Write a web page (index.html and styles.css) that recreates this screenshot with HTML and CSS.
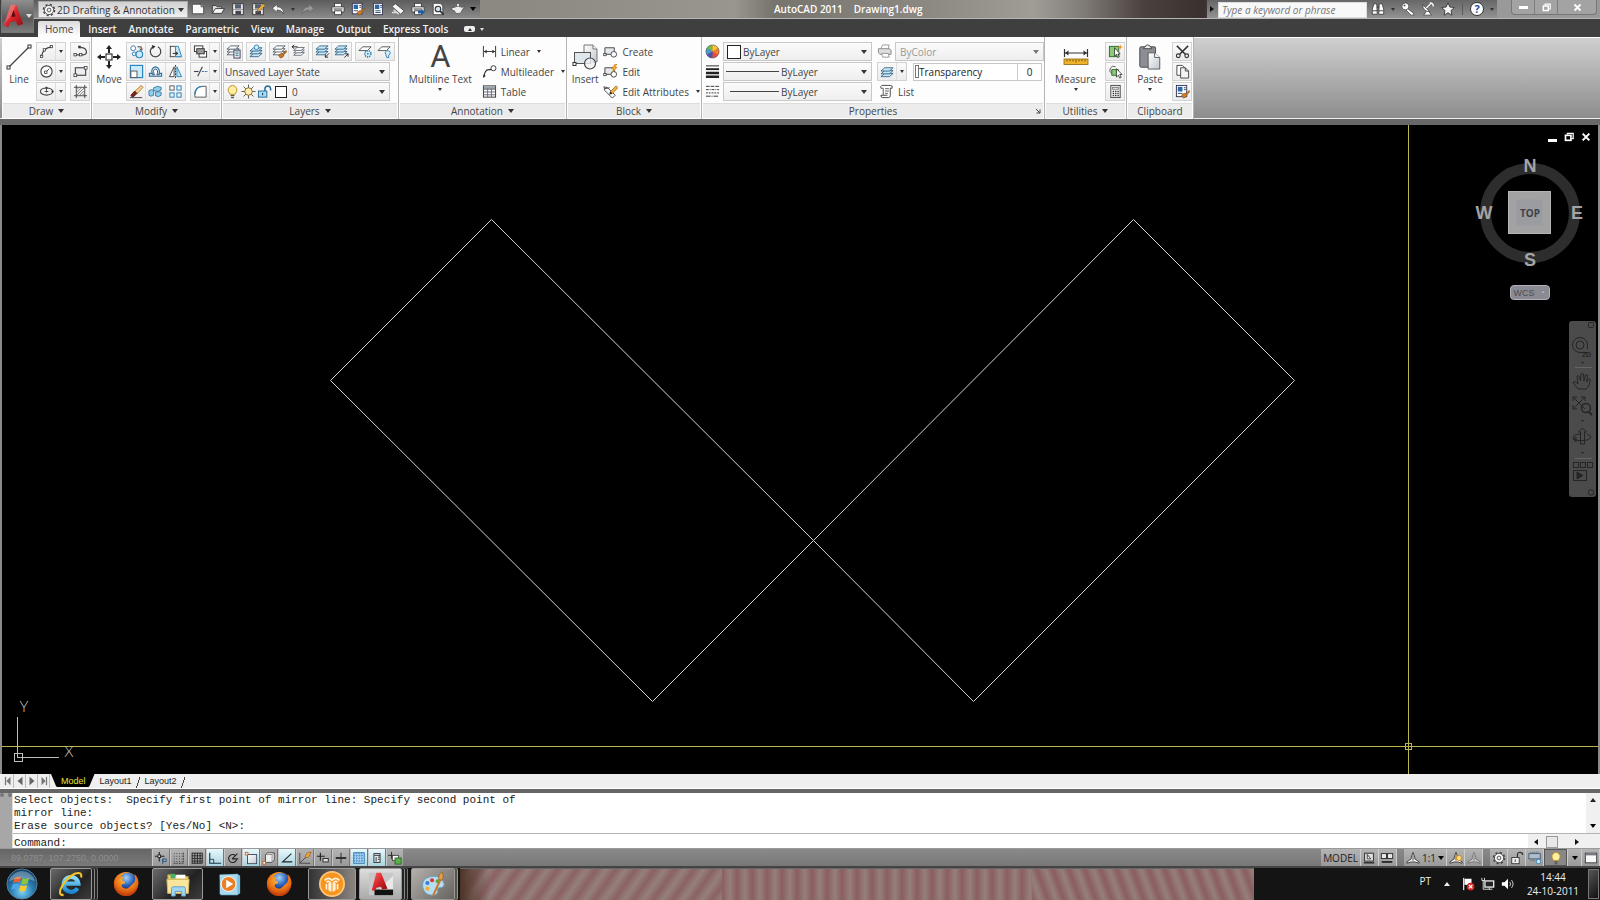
FILE: index.html
```html
<!DOCTYPE html>
<html lang="en">
<head>
<meta charset="utf-8">
<title>AutoCAD 2011 - Drawing1.dwg</title>
<link rel="stylesheet" href="styles.css">
</head>
<body>
<svg class="sprite" aria-hidden="true">
  <defs>
    <linearGradient id="g-red" x1="0" y1="0" x2="1" y2="1"><stop offset="0" stop-color="#f46a62"/><stop offset=".5" stop-color="#d8242a"/><stop offset="1" stop-color="#8c0d12"/></linearGradient>
    <radialGradient id="g-orb" cx=".5" cy=".75" r=".7"><stop offset="0" stop-color="#7fd6f5"/><stop offset=".5" stop-color="#2b7fb5"/><stop offset="1" stop-color="#123f66"/></radialGradient>
    <radialGradient id="g-fox" cx=".5" cy=".3" r=".8"><stop offset="0" stop-color="#ffc83c"/><stop offset=".5" stop-color="#f07818"/><stop offset="1" stop-color="#b83408"/></radialGradient>
    <radialGradient id="g-globe" cx=".4" cy=".3" r=".7"><stop offset="0" stop-color="#a8d4f8"/><stop offset=".6" stop-color="#2f68c0"/><stop offset="1" stop-color="#182f7c"/></radialGradient>
    <linearGradient id="g-ie" x1="0" y1="0" x2="0" y2="1"><stop offset="0" stop-color="#8be0fb"/><stop offset="1" stop-color="#1b86d2"/></linearGradient>
    <linearGradient id="g-box" x1="0" y1="0" x2="1" y2="1"><stop offset="0" stop-color="#fff"/><stop offset="1" stop-color="#c3c8cf"/></linearGradient>
  </defs>
  <symbol id="i-line" viewBox="0 0 26 26"><path d="M2.500 23.500L23.500 2.500" stroke="#444" stroke-width="1.300"/><g fill="#fff" stroke="#333"><rect x="1" y="22" width="3" height="3"/><rect x="22" y="1" width="3" height="3"/></g></symbol>
  <symbol id="i-arc" viewBox="0 0 16 16"><path d="M2.500 13.500Q4 4 13.500 3" fill="none" stroke="#444" stroke-width="1.300"/><g fill="#fff" stroke="#333" stroke-width=".8"><rect x="1.500" y="12" width="2.500" height="2.500"/><rect x="4.500" y="5" width="2.500" height="2.500"/><rect x="12" y="1.500" width="2.500" height="2.500"/></g></symbol>
  <symbol id="i-circle" viewBox="0 0 16 16"><circle cx="8" cy="8" r="6" fill="#fff" stroke="#444" stroke-width="1.200"/><path d="M7 9l4-4" stroke="#444"/><rect x="6" y="7.500" width="2.500" height="2.500" fill="#fff" stroke="#333" stroke-width=".8"/></symbol>
  <symbol id="i-ellipse" viewBox="0 0 16 16"><ellipse cx="8" cy="8" rx="6.500" ry="3.800" fill="none" stroke="#444" stroke-width="1.200"/><path d="M8 4v5M6 8h4" stroke="#444" fill="none"/><rect x="7" y="3" width="2" height="2" fill="#333"/><rect x="13.500" y="7" width="2" height="2" fill="#333"/></symbol>
  <symbol id="i-pline" viewBox="0 0 16 16"><path d="M2 11.500h6M7 3.500c9 0 9 8 4 8H8" fill="none" stroke="#444" stroke-width="1.300"/><g fill="#fff" stroke="#333" stroke-width=".8"><rect x="1" y="10.200" width="2.500" height="2.500"/><rect x="7" y="10.200" width="2.500" height="2.500"/><rect x="6" y="2.200" width="2" height="2"/></g></symbol>
  <symbol id="i-rect" viewBox="0 0 16 16"><rect x="2.500" y="4" width="11" height="8" fill="#e9eef3" stroke="#444" stroke-width="1.200"/><rect x="1" y="10.500" width="3" height="3" fill="#fff" stroke="#333" stroke-width=".8"/><rect x="12" y="2.500" width="3" height="3" fill="#fff" stroke="#333" stroke-width=".8"/></symbol>
  <symbol id="i-hatch" viewBox="0 0 16 16"><path d="M3.500 1v14M12.500 1v14M1 3.500h14M1 12.500h14" stroke="#444"/><path d="M4 6l2-2M4 9l5-5M4 12l8-8M7 12l5-5M10 12l2-2" stroke="#777"/></symbol>
  <symbol id="i-move" viewBox="0 0 26 26"><rect x="10" y="10" width="6" height="6" fill="#fff" stroke="#333" stroke-width="1.200"/><path d="M13 1l3 4h-2v4h-2V5h-2zM13 25l3-4h-2v-4h-2v4h-2zM1 13l4-3v2h4v2H5v2zM25 13l-4-3v2h-4v2h4v2z" fill="#222"/></symbol>
  <symbol id="i-copy" viewBox="0 0 16 16"><circle cx="4.500" cy="4.500" r="2.600" fill="#fff" stroke="#3c7fb0"/><path d="M9 3h4v3M11.500 5l1.500 2 1.500-2" fill="none" stroke="#333"/><circle cx="11" cy="11" r="3.600" fill="#cdeafa" stroke="#2a86bd" stroke-width="1.200"/><circle cx="5.500" cy="10.500" r="2" fill="none" stroke="#2a86bd"/></symbol>
  <symbol id="i-rotate" viewBox="0 0 16 16"><path d="M6 2.800A5.600 5.600 0 1 0 10.500 3" fill="none" stroke="#444" stroke-width="1.300"/><path d="M4 1l4 1.500-3 3z" fill="#333"/></symbol>
  <symbol id="i-stretch" viewBox="0 0 16 16"><path d="M2 2.500h6M2.500 2v12M2 13.500h12" stroke="#444"/><path d="M8 2.500h3l3.500 11H8z" fill="#bfe4f6" stroke="#2a86bd"/><path d="M5 10h5M8.500 8.500L10.500 10l-2 1.500" stroke="#222" fill="none"/></symbol>
  <symbol id="i-scale" viewBox="0 0 16 16"><rect x="1.500" y="1.500" width="13" height="13" fill="#cdeafa" stroke="#2a86bd" stroke-width="1.300"/><rect x="2" y="7.500" width="6.500" height="7" fill="#fff" stroke="#555"/></symbol>
  <symbol id="i-offset" viewBox="0 0 16 16"><path d="M1.500 13h13v-3H12c1-3-1-7-4-7S3 7 4.500 10h-3z" fill="#cdeafa" stroke="#2a6f9d" stroke-width="1.200"/><path d="M4 11.500h3C5 8 6 5.500 8 5.500s3 2.500 1.500 6h3" fill="#fff" stroke="#444"/></symbol>
  <symbol id="i-mirror" viewBox="0 0 16 16"><path d="M6.500 3v10.500h-5z" fill="#fff" stroke="#444"/><path d="M9.500 3v10.500h5z" fill="#bfe4f6" stroke="#2a86bd"/><path d="M8 1v14" stroke="#333" stroke-dasharray="2 1"/></symbol>
  <symbol id="i-erase" viewBox="0 0 16 16"><path d="M1 14.500h13" stroke="#444"/><path d="M6 8l7-6.500 2 2L8.500 10.500z" fill="#f7d489" stroke="#8c6428" stroke-width=".8"/><path d="M2 12l4-4.500 2.500 2.500L5 13.500H3z" fill="#7a2418" stroke="#4f160e" stroke-width=".8"/></symbol>
  <symbol id="i-explode" viewBox="0 0 16 16"><g fill="#8fd0ef" stroke="#24648d" stroke-width=".8"><path d="M1 7l3-1 2 1v5l-3 1-2-1z"/><path d="M6 4l4-1.500 4 1v3L10 8 6 7z"/><path d="M8 9l3-1 3 1v3l-3 1.500-3-1z"/></g></symbol>
  <symbol id="i-array" viewBox="0 0 16 16"><rect x="2" y="2" width="4.500" height="4.500" fill="#fff" stroke="#555"/><g fill="#e5f5fd" stroke="#2a7fb5"><rect x="9.500" y="2" width="4.500" height="4.500"/><rect x="2" y="9.500" width="4.500" height="4.500"/><rect x="9.500" y="9.500" width="4.500" height="4.500"/></g></symbol>
  <symbol id="i-order" viewBox="0 0 16 16"><g stroke="#333"><rect x="1.500" y="2" width="9" height="6" fill="#fff"/><rect x="6.500" y="8" width="8" height="6" fill="#fff"/><rect x="4" y="5" width="8" height="5.500" fill="#999"/></g></symbol>
  <symbol id="i-trim" viewBox="0 0 16 16"><path d="M1 8h5" stroke="#444" stroke-width="1.200"/><path d="M9.500 8H16" stroke="#2a6fb5" stroke-width="1.200" stroke-dasharray="2 1"/><path d="M5 13l5-10" stroke="#444" stroke-width="1.200"/></symbol>
  <symbol id="i-fillet" viewBox="0 0 16 16"><path d="M2 14V10Q3 2.500 10 2.500h4V14z" fill="#fff" stroke="#555"/><path d="M2 11Q2.500 3 10 2.500" fill="none" stroke="#2a7fb5" stroke-width="1.500"/></symbol>
  <symbol id="i-layers" viewBox="0 0 16 16"><g fill="#fff" stroke="#4a5560" stroke-width=".9"><path d="M1 11.500L5 8h9l-4 3.500z"/><path d="M1 8.500L5 5h9l-4 3.500z"/><path d="M1 5.500L5 2h9l-4 3.500z"/></g></symbol>
  <symbol id="i-layersb" viewBox="0 0 16 16"><g fill="#c6e8f8" stroke="#2f5f80" stroke-width=".9"><path d="M1 13.500L5 10h9l-4 3.500z"/><path d="M1 10.500L5 7h9l-4 3.500z"/><path d="M1 7.500L5 4h9l-4 3.500z"/></g></symbol>
  <symbol id="i-lprop" viewBox="0 0 16 16"><use href="#i-layers"/><rect x="8.500" y="6.500" width="6.500" height="8.500" fill="#fff" stroke="#335"/><path d="M10 8.500h3.500M10 10.500h3.500M10 12.500h3.500" stroke="#268"/></symbol>
  <symbol id="i-lcur" viewBox="0 0 16 16"><use href="#i-layersb"/><circle cx="8" cy="3.500" r="2.500" fill="#d7effa" stroke="#2a7fb5"/></symbol>
  <symbol id="i-lmatch" viewBox="0 0 16 16"><use href="#i-layers"/><path d="M7 12q3-3 5-2l3-3 1 1-3 3q0 3-4 4z" fill="#c9782a" stroke="#7c4410" stroke-width=".7"/></symbol>
  <symbol id="i-lprev" viewBox="0 0 16 16"><g transform="translate(2 2)"><use href="#i-layers" width="14" height="14"/></g><path d="M1 3h6M1 3l2.500-2M1 3l2.500 2" stroke="#222" fill="none"/></symbol>
  <symbol id="i-liso" viewBox="0 0 16 16"><g transform="translate(0 -2)"><use href="#i-layersb"/></g><path d="M15 10l-4 4M11 11v3h3" stroke="#222" fill="none"/></symbol>
  <symbol id="i-luniso" viewBox="0 0 16 16"><g transform="translate(0 -2)"><use href="#i-layersb"/></g><path d="M11 14.500l4-4M12 10.500h3v3" stroke="#222" fill="none"/></symbol>
  <symbol id="i-lfreeze" viewBox="0 0 16 16"><path d="M1 7l4-4h9l-4 4z" fill="#fff" stroke="#555"/><circle cx="10.500" cy="10.500" r="3.300" fill="#d7effa" stroke="#2a7fb5" stroke-width="1.500" stroke-dasharray="1.500 .8"/><circle cx="10.500" cy="10.500" r="1" fill="#2a7fb5"/></symbol>
  <symbol id="i-loff" viewBox="0 0 16 16"><path d="M1 7l4-4h9l-4 4z" fill="#fff" stroke="#555"/><path d="M9.500 11.500q-2-3 1-4.500 4 0 3.500 3l-1.500 2v2.500h-2z" fill="#d7effa" stroke="#2a7fb5"/></symbol>
  <symbol id="i-bulb" viewBox="0 0 16 16"><path d="M5.500 11Q2.500 7.500 3.500 5 5 1.500 8 1.500T12.500 5Q13.500 7.500 10.500 11z" fill="#fdf0a0" stroke="#c08a20"/><path d="M6 12.500h4M6.500 14.500h3" stroke="#555" stroke-width="1.300"/></symbol>
  <symbol id="i-sun" viewBox="0 0 16 16"><path d="M8 .5v15M.5 8h15M2.700 2.700l10.600 10.600M13.300 2.700L2.700 13.300" stroke="#555"/><circle cx="8" cy="8" r="4" fill="#ffeeb0" stroke="#8a6a20"/></symbol>
  <symbol id="i-unlock" viewBox="0 0 16 16"><path d="M8.500 8V4.500Q9 2 11.500 2T14.500 5v2" fill="none" stroke="#246a94" stroke-width="1.600"/><rect x="1.500" y="7.500" width="9" height="6.500" fill="#a9dcf5" stroke="#246a94"/><path d="M6 9.500v2.500" stroke="#123"/></symbol>
  <symbol id="i-linear" viewBox="0 0 16 16"><path d="M1.500 2v12M14.500 2v12M2 8h12" stroke="#333"/><path d="M2 8l3-2v4zM14 8l-3-2v4z" fill="#333"/></symbol>
  <symbol id="i-mleader" viewBox="0 0 16 16"><path d="M2 14Q3 6 7 6h3" fill="none" stroke="#333" stroke-width="1.200"/><path d="M1 15l.5-4 2.500 1.500z" fill="#333"/><circle cx="12.200" cy="4.500" r="2.700" fill="#fff" stroke="#333"/></symbol>
  <symbol id="i-table" viewBox="0 0 16 16"><rect x="1.500" y="2" width="13" height="12" fill="#fff" stroke="#333"/><rect x="2" y="2.500" width="12" height="3" fill="#9aa5ad"/><path d="M2 5.500h12M2 8.500h12M2 11.500h12M6 5v9M10 5v9" stroke="#667"/></symbol>
  <symbol id="i-insert" viewBox="0 0 26 26"><path d="M12 1h9l4 4v13H12z" fill="url(#g-box)" stroke="#777"/><path d="M21 1v4h4" fill="#fff" stroke="#777"/><rect x="2.500" y="8.500" width="16" height="11" fill="#dfe6ec" stroke="#555"/><circle cx="18" cy="19.500" r="5.500" fill="#edf1f5" fill-opacity=".8" stroke="#444" stroke-width="1.200"/><rect x="1" y="18.500" width="3" height="3" fill="#fff" stroke="#333"/></symbol>
  <symbol id="i-bcreate" viewBox="0 0 16 16"><path d="M2 4h10v7H2z" fill="#e3e8ec" stroke="#444"/><circle cx="11.500" cy="11" r="3" fill="#fff" stroke="#444"/><rect x=".8" y="10" width="2.500" height="2.500" fill="#fff" stroke="#333" stroke-width=".8"/></symbol>
  <symbol id="i-bedit" viewBox="0 0 16 16"><use href="#i-bcreate"/><path d="M13 0L9 5h2.500L10 9l5-5.500h-2.500L15 0z" fill="#ffb52e" stroke="#b56a0c" stroke-width=".6"/></symbol>
  <symbol id="i-battr" viewBox="0 0 16 16"><path d="M1 3l4 1 8 8-3 3-8-8z" fill="#fff" stroke="#444"/><path d="M2 5l5-1" stroke="#444"/><path d="M7 11l1-3 6-6 2 2-6 6z" fill="#f3b340" stroke="#7c5410" stroke-width=".7"/><path d="M7 11l1-3 2 2z" fill="#222"/></symbol>
  <symbol id="i-wheel" viewBox="0 0 16 16"><circle cx="8" cy="8" r="7" fill="#e64b3c"/><path d="M8 8L1.900 4.500A7 7 0 0 1 8 1z" fill="#6abf45"/><path d="M8 8V1a7 7 0 0 1 6.100 3.500z" fill="#f7c92c"/><path d="M8 8l6.100-3.500A7 7 0 0 1 14.100 11.500z" fill="#ee8130"/><path d="M8 8L1.900 4.500a7 7 0 0 0 0 7z" fill="#3aa0da"/><path d="M8 8l-6.100 3.500A7 7 0 0 0 8 15z" fill="#4552b8"/><circle cx="8" cy="8" r="7" fill="none" stroke="#666" stroke-width=".7"/></symbol>
  <symbol id="i-lweight" viewBox="0 0 16 16"><path d="M1 2h14" stroke="#222"/><path d="M1 5.500h14" stroke="#222" stroke-width="2"/><path d="M1 9.500h14M1 13.500h14" stroke="#222" stroke-width="2.600"/></symbol>
  <symbol id="i-ltype" viewBox="0 0 16 16"><path d="M1 2.500h14" stroke="#333" stroke-dasharray="4 1"/><path d="M1 6h14" stroke="#333" stroke-dasharray="3 1 1 1"/><path d="M1 9.500h14" stroke="#333" stroke-dasharray="2 1"/><path d="M1 13h14" stroke="#333" stroke-dasharray="5 1 1 1"/></symbol>
  <symbol id="i-plot" viewBox="0 0 16 16"><path d="M4 5l2-4h7l-1 4" fill="#fff" stroke="#999"/><path d="M1.500 5h12l1.500 2v4H3l-1.500-2z" fill="#ddd" stroke="#888"/><path d="M5 10h7l1 4H6z" fill="#fff" stroke="#999"/></symbol>
  <symbol id="i-list" viewBox="0 0 16 16"><path d="M3 1.500h9q3 0 2 3h-2v8q0 2-2 2H4q-2 0-2-2.500h7" fill="#fff" stroke="#444"/><path d="M3 1.500q-2 1-1 3h2.500V12M6.500 5h4M6.500 7.500h4M6.500 10h3" stroke="#555" fill="none"/></symbol>
  <symbol id="i-measure" viewBox="0 0 26 18"><path d="M1.500 1v8M24.500 1v8M2 5h22" stroke="#333" stroke-width="1.200"/><path d="M2 5l3.500-2.500v5zM24 5l-3.500-2.500v5z" fill="#333"/><rect x="1" y="11" width="24" height="5.500" fill="#efb62c" stroke="#8a6410" stroke-width=".8"/><path d="M4 11.500v2M7 11.500v2M10 11.500v2M13 11.500v3M16 11.500v2M19 11.500v2M22 11.500v2" stroke="#7a560c"/></symbol>
  <symbol id="i-selall" viewBox="0 0 16 16"><rect x="1.500" y="2.500" width="10" height="11" fill="#8cc978" stroke="#2d6b24"/><path d="M7 4v9l2-2 1.500 3.500 1.500-.8-1.500-3H13z" fill="#fff" stroke="#222" stroke-width=".8"/><path d="M13 .5l.8 2 2 .8-2 .8-.8 2-.8-2-2-.8 2-.8z" fill="#f58e1e"/></symbol>
  <symbol id="i-qsel" viewBox="0 0 16 16"><path d="M4 6h7v6H4z" fill="#8cc978" stroke="#2d6b24"/><path d="M8 3A4 4 0 1 0 4 10" fill="none" stroke="#555"/><path d="M9 5v9l2-2 1.500 3 1.500-.8-1.500-3H15z" fill="#fff" stroke="#222" stroke-width=".8"/></symbol>
  <symbol id="i-calc" viewBox="0 0 16 16"><rect x="3" y="1.500" width="10" height="13" fill="#f4f4f4" stroke="#444"/><rect x="5" y="3.500" width="6" height="2" fill="#fff" stroke="#555" stroke-width=".8"/><path d="M5 8h6.500M5 10.200h6.500M5 12.400h6.500" stroke="#333" stroke-width="1.400" stroke-dasharray="1.500 1"/></symbol>
  <symbol id="i-paste" viewBox="0 0 26 28"><rect x="2" y="3" width="17" height="22" rx="1.500" fill="#8b8f94" stroke="#444"/><path d="M6 5q0-2 2-2 0-2 2.500-2T13 3q2 0 2 2z" fill="#eee" stroke="#444"/><path d="M11 9.500h7l5.500 5v12.500H11z" fill="url(#g-box)" stroke="#555"/><path d="M18 9.500v5h5.500" fill="#fff" stroke="#555"/></symbol>
  <symbol id="i-cut" viewBox="0 0 16 16"><path d="M2 2l9 9M14 2l-9 9" stroke="#333" stroke-width="1.600"/><circle cx="3.500" cy="12.500" r="2" fill="none" stroke="#333" stroke-width="1.200"/><circle cx="12.500" cy="12.500" r="2" fill="none" stroke="#333" stroke-width="1.200"/></symbol>
  <symbol id="i-copyclip" viewBox="0 0 16 16"><path d="M2 1.500h6l2 2V12H2z" fill="#fff" stroke="#444"/><path d="M6 4h5l3.500 3.500v7.500H6z" fill="#f2f4f6" stroke="#444"/><path d="M11 4v3.500h3.500" fill="none" stroke="#444"/></symbol>
  <symbol id="i-match" viewBox="0 0 16 16"><rect x="1.500" y="1.500" width="11" height="12" fill="#fff" stroke="#335"/><rect x="3" y="3" width="5" height="5" fill="#2a68a8"/><path d="M9.500 4h2M9.500 6h2M3 10h5" stroke="#246"/><path d="M7 12q3-3 5-2l3-3 1 1-3 3q0 3-4 4z" fill="#d17f2c" stroke="#7c4410" stroke-width=".7"/></symbol>
  <symbol id="i-gear" viewBox="0 0 16 16"><circle cx="8" cy="8" r="6.300" fill="none" stroke="#444" stroke-width="1.800" stroke-dasharray="2.500 2.450"/><circle cx="8" cy="8" r="5.200" fill="#fff" stroke="#444"/><circle cx="8" cy="8" r="2.200" fill="#eee" stroke="#444"/></symbol>
  <symbol id="i-new" viewBox="0 0 16 16"><path d="M1.500 2.500h10l3 3v8h-13z" fill="#fafafa" stroke="#444"/><path d="M11.500 2.500v3h3" fill="#ccc" stroke="#444"/></symbol>
  <symbol id="i-open" viewBox="0 0 16 16"><path d="M1.500 13V4h4l1.500 1.500h5V8" fill="#ddd" stroke="#333"/><path d="M1.500 13L5 7.500h10.500L12 13z" fill="#f5f5f5" stroke="#333"/></symbol>
  <symbol id="i-save" viewBox="0 0 16 16"><rect x="2" y="2" width="12" height="12.500" fill="#f2f2f2" stroke="#333"/><rect x="4.500" y="2.500" width="7" height="5" fill="#556070"/><rect x="5" y="10" width="6.500" height="4" fill="#445"/><path d="M2.500 8.500h11" stroke="#888"/></symbol>
  <symbol id="i-saveas" viewBox="0 0 16 16"><use href="#i-save"/><path d="M7 11l1-3 6-6 2 2-6 6z" fill="#f3b340" stroke="#7c5410" stroke-width=".7"/></symbol>
  <symbol id="i-undo" viewBox="0 0 16 16"><path d="M1.500 7L7 2.500v3q7 0 7.500 8Q12 9 7 9v3z" fill="#f5f5f5" stroke="#444" stroke-width=".8"/></symbol>
  <symbol id="i-redo" viewBox="0 0 16 16"><path d="M14.500 7L9 2.500v3q-7 0-7.500 8Q4 9 9 9v3z" fill="#999" stroke="#666" stroke-width=".8"/></symbol>
  <symbol id="i-print" viewBox="0 0 16 16"><path d="M4 6V1.500h8V6" fill="#fff" stroke="#333"/><rect x="1" y="5.500" width="14" height="6" rx="1" fill="#f1f1f1" stroke="#333"/><path d="M4 10h8v4.500H4z" fill="#fff" stroke="#333"/><path d="M3 8h10" stroke="#333"/></symbol>
  <symbol id="i-sheet" viewBox="0 0 16 16"><rect x="3" y="1.500" width="10" height="13" fill="#fff" stroke="#335"/><rect x="4.500" y="3" width="5" height="5" fill="#2a68a8"/><path d="M10.500 4h2M10.500 6h2M5 10h6M5 12h6" stroke="#246"/></symbol>
  <symbol id="i-web" viewBox="0 0 16 16"><path d="M1 5l4-3 10 8-4 4z" fill="#f5f5f5" stroke="#444"/><path d="M1 12h7M3 9l6 5" stroke="#ddd" stroke-width="1.500"/></symbol>
  <symbol id="i-publish" viewBox="0 0 16 16"><use href="#i-print"/><path d="M8 10h4V8l4 3.500-4 3.500v-2H8z" fill="#1e5fa8"/></symbol>
  <symbol id="i-preview" viewBox="0 0 16 16"><path d="M2.500 1.500h8l3 3v10h-11z" fill="#fff" stroke="#444"/><circle cx="8" cy="8" r="3.200" fill="#cfe3f0" stroke="#333" stroke-width="1.300"/><path d="M10.500 10.500l4 4" stroke="#333" stroke-width="2"/></symbol>
  <symbol id="i-teapot" viewBox="0 0 16 16"><path d="M4 6q4-3 8 0l3.500-1-2.500 4q-1 4.500-5 4.500T4 10Q0 10 1 6.500z" fill="#ededed" stroke="#555"/><circle cx="8" cy="3.500" r="1.200" fill="#fff"/></symbol>
  <symbol id="i-binoc" viewBox="0 0 16 16"><g fill="#fff" stroke="#333" stroke-width=".9"><path d="M3.500 2h3l.7 12H1.500V8z"/><path d="M9.500 2h3l2 6v6H8.800z"/></g><path d="M2 10h5M9 10h5M7 6h2" stroke="#333"/></symbol>
  <symbol id="i-key" viewBox="0 0 16 16"><path d="M7 7l7.500 6v2h-3L5.500 9" fill="#fff" stroke="#444" stroke-width=".9"/><circle cx="5" cy="5" r="4" fill="#fff" stroke="#444" stroke-width=".9"/><circle cx="4" cy="4" r="1.200" fill="#555"/></symbol>
  <symbol id="i-dish" viewBox="0 0 16 16"><path d="M2 3q0 8 8 8zM6 11l-3 4h9l-3-4" fill="#fff" stroke="#444" stroke-width=".9"/><path d="M6 7l6-6M10 1q4 0 4 4" stroke="#fff" stroke-width="1.500" fill="none"/></symbol>
  <symbol id="i-star" viewBox="0 0 16 16"><path d="M8 1l2.100 4.800 5.200.5-3.900 3.500 1.100 5.200L8 12.300 3.500 15l1.100-5.200L.7 6.300l5.200-.5z" fill="#f5f5f5" stroke="#333"/></symbol>
  <symbol id="i-restore" viewBox="0 0 12 12"><path d="M4 3V1.500h7V8H9" fill="none" stroke="#fff" stroke-width="1.500"/><rect x="1.800" y="4" width="6.500" height="6" fill="none" stroke="#fff" stroke-width="2"/></symbol>
  <symbol id="i-x" viewBox="0 0 12 12"><path d="M2 2l8 8M10 2l-8 8" stroke="#fff" stroke-width="2.400"/></symbol>
  <symbol id="i-logo" viewBox="0 0 24 28"><path d="M1 24L9 1h6l8 22-6 2-2.500-5L8 21l-2 6z" fill="url(#g-red)"/><path d="M9 1h6L9 14 1 24z" fill="#fff" fill-opacity=".22"/><path d="M9.500 15L12 7l2.500 7.500z" fill="#5b0a0d"/></symbol>
  <symbol id="i-annot" viewBox="0 0 16 16"><path d="M8 1.500L10 7v2l5 3.500v1.500l-5-1.500H6L1 14v-1.500L6 9V7z" fill="#f4f4f4" stroke="#333"/><path d="M8 5v6" stroke="#333"/></symbol>
  <symbol id="i-fox" viewBox="0 0 28 28"><circle cx="14" cy="14" r="13" fill="url(#g-fox)"/><circle cx="16" cy="11" r="9" fill="url(#g-globe)"/><path d="M2 8q1 0 3-4l2 3 4-1-1 4 3 2q0 2-3 2l-1 3q5 4 9 0l5-5q2-4 0-9 6 6 4 13-3 10-12 10Q2 25 1 15z" fill="url(#g-fox)"/><path d="M1 13q3 11 13 12 9-1 12.500-9Q25 27 14 27 2 26 1 13z" fill="#c8410c"/></symbol>
</svg>

<div class="app">
  <header class="header">
    <button class="appmenu" aria-label="Application menu"><svg class="logo"><use href="#i-logo"/></svg><span class="tri light"></span></button>
    <div class="titlebar">
      <div class="qat">
        <label class="workspace"><svg class="ico"><use href="#i-gear"/></svg><select aria-label="Workspace"><option>2D Drafting &amp; Annotation</option></select><span class="tri"></span></label>
        <button aria-label="New"><svg class="ico"><use href="#i-new"/></svg></button>
        <button aria-label="Open"><svg class="ico"><use href="#i-open"/></svg></button>
        <button aria-label="Save"><svg class="ico"><use href="#i-save"/></svg></button>
        <button aria-label="Save as"><svg class="ico"><use href="#i-saveas"/></svg></button>
        <button aria-label="Undo"><svg class="ico"><use href="#i-undo"/></svg></button>
        <button class="slim" aria-label="Undo list"><span class="tri tiny"></span></button>
        <button aria-label="Redo"><svg class="ico"><use href="#i-redo"/></svg></button>
        <button class="slim" aria-label="Redo list"><span class="tri tiny dim"></span></button>
        <button aria-label="Plot"><svg class="ico"><use href="#i-print"/></svg></button>
        <button aria-label="Match properties"><svg class="ico"><use href="#i-match"/></svg></button>
        <button aria-label="Sheet set"><svg class="ico"><use href="#i-sheet"/></svg></button>
        <button aria-label="Clean screen"><svg class="ico"><use href="#i-web"/></svg></button>
        <button aria-label="Publish"><svg class="ico"><use href="#i-publish"/></svg></button>
        <button aria-label="Preview"><svg class="ico"><use href="#i-preview"/></svg></button>
        <button aria-label="Render"><svg class="ico"><use href="#i-teapot"/></svg></button>
        <button class="slim" aria-label="Customize"><span class="tri black"></span></button>
      </div>
      <div class="doc-title"><span>AutoCAD 2011</span><span>Drawing1.dwg</span></div>
      <div class="infobar">
        <button class="slim" aria-label="Collapse search"><span class="tri right black"></span></button>
        <input type="text" aria-label="Search" placeholder="Type a keyword or phrase">
        <button aria-label="Search"><svg class="ico"><use href="#i-binoc"/></svg></button>
        <button class="slim" aria-label="Search options"><span class="tri tiny"></span></button>
        <button aria-label="Subscription"><svg class="ico"><use href="#i-key"/></svg></button>
        <button aria-label="Communication"><svg class="ico"><use href="#i-dish"/></svg></button>
        <button aria-label="Favorites"><svg class="ico"><use href="#i-star"/></svg></button>
        <span class="rule"></span>
        <button class="help" aria-label="Help"><b>?</b></button>
        <button class="slim" aria-label="Help options"><span class="tri tiny"></span></button>
      </div>
      <div class="winbtns">
        <button aria-label="Minimize"><span class="dash"></span></button>
        <button aria-label="Restore"><svg><use href="#i-restore"/></svg></button>
        <button class="wide" aria-label="Close"><svg><use href="#i-x"/></svg></button>
      </div>
    </div>
    <nav class="tabs">
      <a href="#home" class="active">Home</a><a href="#insert">Insert</a><a href="#annotate">Annotate</a><a href="#parametric">Parametric</a><a href="#view">View</a><a href="#manage">Manage</a><a href="#output">Output</a><a href="#express">Express Tools</a>
      <button class="pill" aria-label="Minimize ribbon"><span></span></button><span class="tri tiny light"></span>
    </nav>
  </header>

  <div class="ribbon">
    <section class="panel draw">
      <div class="body">
        <button class="big"><svg class="bigico"><use href="#i-line"/></svg>Line</button>
        <div class="col">
          <div class="grp"><button aria-label="Arc"><svg class="ico"><use href="#i-arc"/></svg></button><button class="dd" aria-label="More"><span class="tri tiny"></span></button></div>
          <div class="grp"><button aria-label="Circle"><svg class="ico"><use href="#i-circle"/></svg></button><button class="dd" aria-label="More"><span class="tri tiny"></span></button></div>
          <div class="grp"><button aria-label="Ellipse"><svg class="ico"><use href="#i-ellipse"/></svg></button><button class="dd" aria-label="More"><span class="tri tiny"></span></button></div>
        </div>
        <div class="col">
          <div class="grp"><button aria-label="Polyline"><svg class="ico"><use href="#i-pline"/></svg></button></div>
          <div class="grp"><button aria-label="Rectangle"><svg class="ico"><use href="#i-rect"/></svg></button></div>
          <div class="grp"><button aria-label="Hatch"><svg class="ico"><use href="#i-hatch"/></svg></button></div>
        </div>
      </div>
      <h2>Draw<span class="tri"></span></h2>
    </section>
    <section class="panel modify">
      <div class="body">
        <button class="big"><svg class="bigico"><use href="#i-move"/></svg>Move</button>
        <div class="col">
          <div class="grp"><button aria-label="Copy"><svg class="ico"><use href="#i-copy"/></svg></button><button aria-label="Rotate"><svg class="ico"><use href="#i-rotate"/></svg></button><button aria-label="Stretch"><svg class="ico"><use href="#i-stretch"/></svg></button></div>
          <div class="grp"><button aria-label="Scale"><svg class="ico"><use href="#i-scale"/></svg></button><button aria-label="Offset"><svg class="ico"><use href="#i-offset"/></svg></button><button aria-label="Mirror"><svg class="ico"><use href="#i-mirror"/></svg></button></div>
          <div class="grp"><button aria-label="Erase"><svg class="ico"><use href="#i-erase"/></svg></button><button aria-label="Explode"><svg class="ico"><use href="#i-explode"/></svg></button><button aria-label="Array"><svg class="ico"><use href="#i-array"/></svg></button></div>
        </div>
        <div class="col">
          <div class="grp"><button aria-label="Draw order"><svg class="ico"><use href="#i-order"/></svg></button><button class="dd" aria-label="More"><span class="tri tiny"></span></button></div>
          <div class="grp"><button aria-label="Trim"><svg class="ico"><use href="#i-trim"/></svg></button><button class="dd" aria-label="More"><span class="tri tiny"></span></button></div>
          <div class="grp"><button aria-label="Fillet"><svg class="ico"><use href="#i-fillet"/></svg></button><button class="dd" aria-label="More"><span class="tri tiny"></span></button></div>
        </div>
      </div>
      <h2>Modify<span class="tri"></span></h2>
    </section>
    <section class="panel layers">
      <div class="body">
        <div class="col fill">
          <div class="line">
            <div class="grp"><button aria-label="Layer properties"><svg class="ico"><use href="#i-lprop"/></svg></button></div>
            <div class="grp"><button aria-label="Make current"><svg class="ico"><use href="#i-lcur"/></svg></button></div>
            <div class="grp"><button aria-label="Match layer"><svg class="ico"><use href="#i-lmatch"/></svg></button><button aria-label="Previous layer"><svg class="ico"><use href="#i-lprev"/></svg></button></div>
            <div class="grp"><button aria-label="Isolate"><svg class="ico"><use href="#i-liso"/></svg></button><button aria-label="Unisolate"><svg class="ico"><use href="#i-luniso"/></svg></button></div>
            <div class="grp"><button aria-label="Freeze"><svg class="ico"><use href="#i-lfreeze"/></svg></button><button aria-label="Layer off"><svg class="ico"><use href="#i-loff"/></svg></button></div>
          </div>
          <label class="combo"><select aria-label="Layer state"><option>Unsaved Layer State</option></select><span class="tri"></span></label>
          <label class="combo"><svg class="ico"><use href="#i-bulb"/></svg><svg class="ico"><use href="#i-sun"/></svg><svg class="ico"><use href="#i-unlock"/></svg><span class="swatch"></span><select aria-label="Layer"><option>0</option></select><span class="tri"></span></label>
        </div>
      </div>
      <h2>Layers<span class="tri"></span></h2>
    </section>
    <section class="panel annotation">
      <div class="body">
        <button class="big"><span class="letter">A</span>Multiline Text<span class="tri tiny"></span></button>
        <div class="col links">
          <button><svg class="ico"><use href="#i-linear"/></svg>Linear<span class="tri tiny"></span></button>
          <button><svg class="ico"><use href="#i-mleader"/></svg>Multileader<span class="tri tiny"></span></button>
          <button><svg class="ico"><use href="#i-table"/></svg>Table</button>
        </div>
      </div>
      <h2>Annotation<span class="tri"></span></h2>
    </section>
    <section class="panel block">
      <div class="body">
        <button class="big"><svg class="bigico"><use href="#i-insert"/></svg>Insert</button>
        <div class="col links">
          <button><svg class="ico"><use href="#i-bcreate"/></svg>Create</button>
          <button><svg class="ico"><use href="#i-bedit"/></svg>Edit</button>
          <button><svg class="ico"><use href="#i-battr"/></svg>Edit Attributes<span class="tri tiny"></span></button>
        </div>
      </div>
      <h2>Block<span class="tri"></span></h2>
    </section>
    <section class="panel properties">
      <div class="body">
        <div class="col props">
          <div class="line"><svg class="ico"><use href="#i-wheel"/></svg><label class="combo"><span class="swatch"></span><select aria-label="Color"><option>ByLayer</option></select><span class="tri"></span></label></div>
          <div class="line"><svg class="ico"><use href="#i-lweight"/></svg><label class="combo"><span class="sample"></span><select aria-label="Lineweight"><option>ByLayer</option></select><span class="tri"></span></label></div>
          <div class="line"><svg class="ico"><use href="#i-ltype"/></svg><label class="combo"><span class="sample short"></span><select aria-label="Linetype"><option>ByLayer</option></select><span class="tri"></span></label></div>
        </div>
        <div class="col props">
          <div class="line"><svg class="ico"><use href="#i-plot"/></svg><label class="combo off"><select aria-label="Plot style" disabled><option>ByColor</option></select><span class="tri"></span></label></div>
          <div class="line"><div class="grp"><button aria-label="Transparency source"><svg class="ico"><use href="#i-layersb"/></svg></button><button class="dd" aria-label="More"><span class="tri tiny"></span></button></div><label class="slider"><i></i><span>Transparency</span><input type="text" value="0" aria-label="Transparency"></label></div>
          <div class="links"><button><svg class="ico"><use href="#i-list"/></svg>List</button></div>
        </div>
      </div>
      <h2>Properties<svg class="launch" viewBox="0 0 6 6"><path d="M1 1l4 4M5 1.500V5H1.500" fill="none" stroke="#444"/></svg></h2>
    </section>
    <section class="panel utilities">
      <div class="body">
        <button class="big"><svg class="bigico"><use href="#i-measure"/></svg>Measure<span class="tri tiny"></span></button>
        <div class="col">
          <div class="grp"><button aria-label="Select all"><svg class="ico"><use href="#i-selall"/></svg></button></div>
          <div class="grp"><button aria-label="Quick select"><svg class="ico"><use href="#i-qsel"/></svg></button></div>
          <div class="grp"><button aria-label="Calculator"><svg class="ico"><use href="#i-calc"/></svg></button></div>
        </div>
      </div>
      <h2>Utilities<span class="tri"></span></h2>
    </section>
    <section class="panel clipboard">
      <div class="body">
        <button class="big"><svg class="bigico"><use href="#i-paste"/></svg>Paste<span class="tri tiny"></span></button>
        <div class="col">
          <div class="grp"><button aria-label="Cut"><svg class="ico"><use href="#i-cut"/></svg></button></div>
          <div class="grp"><button aria-label="Copy clip"><svg class="ico"><use href="#i-copyclip"/></svg></button></div>
          <div class="grp"><button aria-label="Match"><svg class="ico"><use href="#i-match"/></svg></button></div>
        </div>
      </div>
      <h2>Clipboard</h2>
    </section>
  </div>

  <main class="canvas">
    <svg class="drawing" viewBox="2 125 1596 649" preserveAspectRatio="xMinYMin meet">
      <g fill="none" stroke="#d4d4d4" stroke-width="1">
        <path d="M491.500 219.500L330.500 380.500 652.500 701.500 813.500 540.500z"/>
        <path d="M1133.500 219.500L1294.500 380.500 973.500 701.500 813.500 540.500z"/>
      </g>
      <g fill="none" stroke="#b9b64c" shape-rendering="crispEdges">
        <path d="M2 746.500H1598M1408.500 125V774"/>
        <rect x="1405.500" y="743.500" width="6" height="6"/>
      </g>
      <g fill="none" stroke="#bdbdbd" shape-rendering="crispEdges">
        <path d="M17.500 717V757.500H59"/><rect x="14.500" y="753.500" width="8" height="8"/>
      </g>
      <g class="axis"><text x="24" y="712" text-anchor="middle">Y</text><text x="69" y="757" text-anchor="middle">X</text></g>
    </svg>
    <div class="mdi"><button aria-label="Minimize drawing"><span class="dash"></span></button><button aria-label="Restore drawing"><svg><use href="#i-restore"/></svg></button><button aria-label="Close drawing"><svg><use href="#i-x"/></svg></button></div>
    <div class="viewcube">
      <svg viewBox="0 -10 110 130"><circle cx="55" cy="55" r="44.500" fill="none" stroke="#2d2d2d" stroke-width="11"/>
        <rect x="33.500" y="33.500" width="42" height="42" fill="#a2a2a2" stroke="#b4b4b4"/><rect x="41.500" y="41.500" width="26" height="26" fill="#9a9ca2"/>
        <g class="compass" text-anchor="middle"><text x="55" y="14">N</text><text x="55" y="108">S</text><text x="9" y="61">W</text><text x="102" y="61">E</text></g>
        <text class="face" x="55" y="59" text-anchor="middle">TOP</text></svg>
      <button class="wcs">WCS<svg viewBox="0 0 8 5"><path d="M1 1h6L4 4z" fill="#b4b4be" stroke="#75757f" stroke-width=".6"/></svg></button>
    </div>
    <div class="navbar">
      <svg viewBox="0 0 27 176" fill="none" stroke="#252525">
        <rect x="19.500" y="1.500" width="5" height="5" rx="1"/>
        <path d="M18 31.500H11A7.500 7.500 0 1 1 18.500 24v4"/><circle cx="11" cy="24" r="4"/>
        <text x="13" y="36" class="twod">2D</text>
        <path d="M12 41h3l-1.500 2z" fill="#252525" stroke="none"/><path d="M6 46.500h17" stroke="#656565"/>
        <path d="M9 68q-2-3-5-6 0-2 3-1l2 2-1-8q2-1 2.500 1l1 4 .5-7q2-1 2.500 0l.5 7 1.500-6q2-1 2 1l-.8 6 2-3q2 0 1.500 2-1 6-4 8z"/>
        <path d="M4 76l12 12M16 76L4 88M4 80v-4h4M16 80v-4h-4M4 84v4h4"/><circle cx="17" cy="87" r="4.500" stroke-width="1.500"/><path d="M20 91l3 3" stroke-width="2"/>
        <path d="M12 99h3l-1.500 2z" fill="#252525" stroke="none"/>
        <path d="M11.500 123v-12h-2l4-4 4 4h-2v12z"/><path d="M11 113q-8 1-7 4 3 4 14 2 8-3 0-6M4 118l3-2v5z"/>
        <path d="M12 131h3l-1.500 2z" fill="#252525" stroke="none"/><path d="M6 137.500h17" stroke="#656565"/>
        <rect x="4.500" y="141.500" width="5" height="5"/><rect x="11.500" y="141.500" width="5" height="5"/><rect x="18.500" y="141.500" width="5" height="5"/><rect x="4.500" y="149.500" width="13" height="10"/><path d="M8 151l6 3.500-6 3.500z" fill="#252525"/>
        <circle cx="22" cy="171.500" r="2.700"/>
      </svg>
    </div>
  </main>

  <div class="sheets">
    <div class="steps">
      <button aria-label="First"><svg viewBox="0 0 12 12"><path d="M3 1v10" stroke="#777" stroke-width="1.500"/><path d="M9 1v10L4 6z" fill="#777"/></svg></button>
      <button aria-label="Previous"><svg viewBox="0 0 12 12"><path d="M9 1v10L3 6z" fill="#666"/></svg></button>
      <button aria-label="Next"><svg viewBox="0 0 12 12"><path d="M3 1v10l6-5z" fill="#666"/></svg></button>
      <button aria-label="Last"><svg viewBox="0 0 12 12"><path d="M9 1v10" stroke="#777" stroke-width="1.500"/><path d="M3 1v10l5-5z" fill="#777"/></svg></button>
    </div>
    <a href="#model" class="sheet on">Model</a><a href="#layout1" class="sheet">Layout1</a><a href="#layout2" class="sheet">Layout2</a>
  </div>

  <section class="command">
    <div class="grip"></div>
    <div class="console">
      <div class="history"><pre>Select objects:  Specify first point of mirror line: Specify second point of
mirror line:
Erase source objects? [Yes/No] &lt;N&gt;:</pre><div class="vscroll"><span class="tri up black"></span><span class="tri black"></span></div></div>
      <div class="prompt"><label for="cmd">Command:</label><input id="cmd" type="text"><div class="hscroll"><span class="tri left black"></span><i></i><span class="tri right black"></span></div><span class="corner"></span></div>
    </div>
  </section>

  <footer class="status">
    <output>89.0787, 107.2750, 0.0000</output>
    <div class="toggles">
      <button aria-label="Infer"><svg class="ico" viewBox="0 0 16 16"><path d="M6 1v11M1 6h11" stroke="#222" stroke-width="1.300"/><rect x="4.500" y="4.500" width="3" height="3" fill="#ddd" stroke="#222"/><path d="M10 9h4v3h-4zM10 9v6" stroke="#258" fill="none"/></svg></button>
      <button aria-label="Snap"><svg class="ico" viewBox="0 0 16 16"><path d="M2 3h10M2 6h10M2 9h10M2 12h10" stroke="#333" stroke-dasharray="1 2"/><path d="M13 2v12H2" stroke="#333" fill="none" stroke-dasharray="2 1"/></svg></button>
      <button aria-label="Grid"><svg class="ico" viewBox="0 0 16 16"><path d="M2.500 2v12M5.500 2v12M8.500 2v12M11.500 2v12M14 2v12M2 2.500h12M2 5.500h12M2 8.500h12M2 11.500h12M2 14h12" stroke="#222"/></svg></button>
      <button class="on" aria-label="Ortho"><svg class="ico" viewBox="0 0 16 16"><path d="M2 2v12h13" stroke="#234" stroke-width="1.300" fill="none"/><path d="M2 9.500h4.500V14" stroke="#234" fill="none"/></svg></button>
      <button aria-label="Polar"><svg class="ico" viewBox="0 0 16 16"><path d="M11 5.500A4.600 4.600 0 1 0 12 10M7 9l6-6M7 9h7" stroke="#222" stroke-width="1.200" fill="none"/></svg></button>
      <button class="on" aria-label="Osnap"><svg class="ico" viewBox="0 0 16 16"><rect x="4" y="4" width="10.500" height="10.500" fill="url(#g-box)" stroke="#345"/><rect x="1.500" y="1.500" width="3" height="3" fill="#fff" stroke="#c86018"/></svg></button>
      <button aria-label="3D osnap"><svg class="ico" viewBox="0 0 16 16"><path d="M4 4l2.500-2H14v8l-2.500 3H4z" fill="#eee" stroke="#444"/><path d="M4 4h7.500v9M11.500 4L14 2" stroke="#888" fill="none"/><rect x="1" y="12" width="3" height="3" fill="#fff" stroke="#c86018"/></svg></button>
      <button class="on" aria-label="Otrack"><svg class="ico" viewBox="0 0 16 16"><path d="M13 3L3 12.500h11" stroke="#222" stroke-width="1.300" fill="none"/></svg></button>
      <button aria-label="Ducs"><svg class="ico" viewBox="0 0 16 16"><path d="M2 2v12h12M2 14l8-8" stroke="#444" fill="none"/><path d="M8 6l3-4 4-1-2 5-3 2z" fill="#f0a23a" stroke="#94540c" stroke-width=".7"/></svg></button>
      <button aria-label="Dyn"><svg class="ico" viewBox="0 0 16 16"><path d="M5 2v9M1 6h9" stroke="#222" stroke-width="1.300"/><rect x="8" y="8.500" width="6" height="4" fill="#ddd" stroke="#222"/></svg></button>
      <button aria-label="Lwt"><svg class="ico" viewBox="0 0 16 16"><path d="M8 2v12" stroke="#222"/><path d="M2 8h12" stroke="#222" stroke-width="2"/></svg></button>
      <button class="on" aria-label="Tpy"><svg class="ico" viewBox="0 0 16 16"><rect x="2" y="2" width="12" height="12" fill="#a8d4f4" stroke="#2d6ea4"/><path d="M2 5h12M2 8h12M2 11h12M5 2v12M8 2v12M11 2v12" stroke="#3a7fc0" stroke-dasharray="1.500 1.500"/></svg></button>
      <button class="on" aria-label="QP"><svg class="ico" viewBox="0 0 16 16"><rect x="4.500" y="3" width="7" height="10" fill="#e4eef2" stroke="#222"/><path d="M5 5h6.500M7 7v5M9 7h2M9 9.500h2" stroke="#222"/></svg></button>
      <button aria-label="SC"><svg class="ico" viewBox="0 0 16 16"><path d="M4 1v8M0 5h8" stroke="#222"/><rect x="5" y="5" width="7" height="6" fill="#fff" stroke="#444"/><rect x="8" y="8" width="7" height="7" fill="#5cb04c" stroke="#2a6320"/></svg></button>
    </div>
    <div class="space"></div>
    <div class="toggles">
      <button class="text">MODEL</button>
      <button aria-label="Layout"><svg class="ico" viewBox="0 0 16 16"><rect x="3" y="2.500" width="10" height="9" fill="#ddd" stroke="#222"/><path d="M6 9V4l4 5z" fill="#fff" stroke="#333"/><path d="M2 13.500h12" stroke="#222" stroke-width="1.500"/></svg></button>
      <button aria-label="Quick view"><svg class="ico" viewBox="0 0 16 16"><g fill="#e8e8e8" stroke="#222"><rect x="1.500" y="3" width="6" height="5.500"/><rect x="8.500" y="3" width="6" height="5.500"/></g><path d="M2 12.500h12" stroke="#222" stroke-width="2"/></svg></button>
    </div>
    <div class="toggles">
      <button class="text"><svg class="ico"><use href="#i-annot"/></svg>1:1<span class="tri black"></span></button>
      <button aria-label="Annotation visibility"><svg class="ico" viewBox="0 0 16 16"><use href="#i-annot"/><circle cx="11.500" cy="8" r="3" fill="#ffd77a" stroke="#d48a10"/></svg></button>
      <button aria-label="Auto scale"><svg class="ico dimmed"><use href="#i-annot"/></svg></button>
    </div>
    <div class="toggles">
      <button aria-label="Workspace"><svg class="ico"><use href="#i-gear"/></svg></button>
      <button aria-label="Lock"><svg class="ico" viewBox="0 0 16 16"><path d="M8.500 8V4q0-2.500 3-2.500t3 3" fill="none" stroke="#333" stroke-width="1.400"/><rect x="2" y="7.500" width="8.500" height="7" fill="#eee" stroke="#333"/><path d="M6 9.500v3" stroke="#333"/></svg></button>
      <button aria-label="Hardware"><svg class="ico" viewBox="0 0 16 16"><rect x="1" y="3" width="13" height="6" fill="#aebccb" stroke="#3f5670"/><path d="M3 11h8M3 1.500h10" stroke="#3f5670" stroke-dasharray="1 1"/><circle cx="12" cy="12" r="2.500" fill="#cdeafa" stroke="#2a7fb5"/></svg></button>
      <button class="pressed" aria-label="Isolate objects"><svg class="ico"><use href="#i-bulb"/></svg></button>
      <button class="slim" aria-label="Status menu"><span class="tri black"></span></button>
      <button aria-label="Clean screen"><svg class="ico" viewBox="0 0 16 16"><rect x="1.500" y="2.500" width="13" height="11" fill="#f8f8f8" stroke="#333"/><path d="M2 4h12" stroke="#778" stroke-width="2"/></svg></button>
    </div>
  </footer>

  <div class="taskbar">
    <button class="start" aria-label="Start"><svg viewBox="0 0 34 34"><circle cx="17" cy="17" r="16" fill="url(#g-orb)" stroke="#5b8096"/><path d="M9 11q4-3 7-1l-1.500 6q-3-2-7 0z" fill="#e8602c"/><path d="M17.500 10.500q3 2 7 0L23 16.500q-4 2-7 0z" fill="#8cc63c"/><path d="M7 17.500q4-2 7 0L12.500 23q-3-2-7 0z" fill="#4aa8e8"/><path d="M15.500 18q3 2 7 0L21 24q-4 2-7 0z" fill="#fcc82c"/><path d="M3 14A14.500 14.500 0 0 1 31 14Q17 8 3 14z" fill="#fff" fill-opacity=".3"/></svg></button>
    <button class="task open stack" aria-label="Internet Explorer"><svg viewBox="0 0 28 28"><path d="M21 18.500A8 8 0 1 1 22 13.500H8" fill="none" stroke="url(#g-ie)" stroke-width="4.500"/><path d="M6 26Q0 26 3 19 8 8 18 3q8-3 7 4" fill="none" stroke="#f4c42c" stroke-width="2.200"/></svg></button>
    <button class="task" aria-label="Firefox"><svg><use href="#i-fox"/></svg></button>
    <button class="task open wide" aria-label="Explorer"><svg viewBox="0 0 28 28"><path d="M3 24V4h8l2 2h12v18z" fill="#e8cc6c" stroke="#b8943c"/><path d="M6 3h5v5H6z" fill="#4ab068"/><path d="M12 4h10v4H12z" fill="#fff"/><path d="M2 9h24l-1 15H3z" fill="#f9e69c" stroke="#cdb05c"/><path d="M7 27v-8q0-2 2-2h11q2 0 2 2v8h-4v-5h-7v5z" fill="#9fd6f3" stroke="#5f9cc4"/></svg></button>
    <button class="task" aria-label="Media Player"><svg viewBox="0 0 28 28"><path d="M4 4l19-1 3 2v19l-3 2H5z" fill="#7cbede"/><rect x="4" y="4" width="19" height="21" fill="#a9d9ee"/><circle cx="13.500" cy="14" r="8" fill="#ee7e24" stroke="#fff"/><path d="M11 9.500l7.500 4.500-7.500 4.500z" fill="#fff"/></svg></button>
    <button class="task" aria-label="Firefox profile"><svg><use href="#i-fox"/></svg></button>
    <button class="task open tight" aria-label="Music"><svg viewBox="0 0 28 28"><circle cx="14" cy="14" r="13" fill="#f7941e" stroke="#ffc678" stroke-width="2"/><path d="M6 10q4-4 8 0 4-4 8 0M8 12q3-2 4.500 1v9M11 13v8M20 12q-3-2-4.500 1v9M17 13v8M8 14v6M20 14v6" stroke="#fff3dc" stroke-width="1.800" fill="none"/></svg></button>
    <button class="task open stack bright" aria-label="AutoCAD"><svg viewBox="0 0 28 28"><rect x="1" y="2" width="26" height="24" fill="#c8c8c8"/><path d="M12 20L27 5v15z" fill="#e8e8e8"/><path d="M7 26V20h20v6z" fill="#111"/><path d="M4 21L9 2h5l7 17-6 1-1-3-5 1-1 3z" fill="url(#g-red)"/></svg></button>
    <button class="task open stack pale" aria-label="Paint"><svg viewBox="0 0 28 28"><path d="M3 18Q1 8 12 6t14 8q0 4-5 4-3 0-2 4 0 4-6 4-8 0-10-8z" fill="#b8dcf0" stroke="#6b9fc0"/><circle cx="8" cy="13" r="2.200" fill="#3a7cd0"/><circle cx="13" cy="10" r="2.200" fill="#d83a30"/><circle cx="19" cy="11" r="2.200" fill="#58a83c"/><circle cx="8" cy="19" r="2.200" fill="#ecb42c"/><path d="M13 26L21 9l2 1-8 17z" fill="#c8792c"/><path d="M20 9q-1-5 4-8 2 5 0 9z" fill="#e0a050" stroke="#8c5a20" stroke-width=".7"/></svg></button>
    <div class="wallpaper" aria-hidden="true"><i class="a"></i><i class="b"></i><i class="c"></i></div>
    <div class="tray">
      <span class="lang">PT</span>
      <button aria-label="Show hidden icons"><span class="tri up light"></span></button>
      <svg viewBox="0 0 16 16"><path d="M3 1v14" stroke="#ddd" stroke-width="1.500"/><path d="M4 2h8v7H4z" fill="#fff"/><circle cx="11" cy="11" r="4.300" fill="#cf2420"/><path d="M9 9l4 4M13 9l-4 4" stroke="#fff" stroke-width="1.500"/></svg>
      <svg viewBox="0 0 16 16"><rect x="4.500" y="4.500" width="10" height="7" fill="#222" stroke="#eee" stroke-width="1.500"/><path d="M6 14h7M9.500 12v2M2.500 4v10H6M1 1v3h3V1" stroke="#eee" fill="none"/></svg>
      <svg viewBox="0 0 16 16"><path d="M1 6h3l4-4v12l-4-4H1z" fill="#fff"/><path d="M10 5.500q2 2.500 0 5M12 3.500q3.500 4.500 0 9" fill="none" stroke="#ddd"/></svg>
      <time>14:44<br>24-10-2011</time>
      <button class="peek" aria-label="Show desktop"></button>
    </div>
  </div>
</div>
</body>
</html>
```
FILE: styles.css
```css
* { box-sizing: border-box; }
body { margin: 0; background: #000; font: 10px/14px "Open Sans", "Noto Sans", sans-serif; color: #444; }
button { margin: 0; padding: 0; border: 0; background: none; font: inherit; color: inherit; display: flex; align-items: center; justify-content: center; }
input, select { margin: 0; padding: 0; border: 0; background: none; font: inherit; color: inherit; appearance: none; min-width: 0; outline: 0; }
a { color: inherit; text-decoration: none; }
svg { display: block; flex: none; }
.sprite { position: absolute; width: 0; height: 0; }
.ico { width: 15px; height: 15px; }
.app { display: flex; flex-direction: column; height: 100vh; min-height: 600px; overflow: hidden; }

.tri { flex: none; width: 0; height: 0; border: 3px solid transparent; border-top: 4px solid #333; border-bottom: 0; }
.tri.tiny { border-width: 2px; border-top-width: 3px; border-bottom: 0; }
.tri.light { border-top-color: #ddd; }
.tri.black { border-top-color: #000; }
.tri.dim { border-top-color: #777; }
.tri.right { border: 3px solid transparent; border-left: 4px solid #111; border-right: 0; }
.tri.left { border: 3px solid transparent; border-right: 4px solid #111; border-left: 0; }
.tri.up { border: 3px solid transparent; border-bottom: 4px solid #222; border-top: 0; }
.tri.up.light { border-bottom-color: #eee; }

/* header */
.header { display: grid; grid-template: 19px 18px / 34px 1fr; background: #3f3f3f; flex: none; }
.appmenu { grid-row: 1 / 3; height: 33px; margin-left: 1px; gap: 2px; border: 1px solid #777; border-top: 0; background: linear-gradient(#8f8f8f, #5a5a5a 60%, #7d7d7d); }
.logo { width: 21px; height: 26px; }
.titlebar { display: flex; border-bottom: 1px solid #b5b5b5; background: linear-gradient(90deg, #8c8882 0, #8c8882 480px, #99958f 700px, #77736d 740px, #8d8983 900px, #a09c96 1000px, #7f7b76 1050px, #4a403d 1110px, #3a302e 1170px, #999 1210px); }
.qat { display: flex; align-items: center; padding: 0 2px 0 4px; background: linear-gradient(#5c5c5c, #8a8a8a); }
.qat > button, .infobar > button { width: 20px; height: 18px; }
.qat > .slim { width: 10px; }
.qat .ico, .infobar .ico { width: 14px; height: 14px; }
.workspace { display: flex; align-items: center; width: 150px; height: 17px; margin: 1px 0 0; padding: 0 3px; border: 1px solid #aaa; background: linear-gradient(#d0d0d0, #f0f0f0); color: #333; }
.workspace select { flex: 1; padding-left: 1px; }
.doc-title { flex: 1; display: flex; gap: 11px; padding-left: 294px; align-items: center; color: #fff; font-weight: 600; white-space: nowrap; }
.infobar { display: flex; align-items: center; background: linear-gradient(#666, #929292); }
.infobar .slim { width: 10px; }
.infobar > input { width: 149px; height: 16px; margin: 2px 1px 0; padding-left: 3px; background: #f8f8f8; border: 1px solid #ddd; }
.infobar > input::placeholder { color: #777; font-style: italic; opacity: 1; }
.rule { width: 1px; height: 12px; background: #5a5a5a; margin: 0 4px; }
.help b { width: 14px; height: 14px; line-height: 12px; border-radius: 50%; background: #fff; color: #1c4f9c; font-size: 11px; border: 1px solid #333; }
.winbtns { display: flex; height: 15px; margin: 0 3px 0 14px; border: 1px solid #777; border-top: 0; border-radius: 0 0 4px 4px; background: #a3a3a3; }
.winbtns button { width: 23px; border-right: 1px solid #7d7d7d; }
.winbtns .wide { width: 38px; border: 0; }
.winbtns svg { width: 9px; height: 9px; }
.dash { width: 9px; height: 3px; background: #fff; align-self: center; }
.tabs { display: flex; align-items: flex-end; padding-left: 4px; color: #f2f2f2; font-weight: 600; }
.tabs a { height: 16px; padding: 0 6px; line-height: 16px; white-space: nowrap; }
.tabs .active { margin-right: 2px; background: linear-gradient(#dcdcdc, #fff); color: #444; border-radius: 2px 2px 0 0; font-weight: 400; padding: 0 7px; }
.pill { width: 11px; height: 6px; margin: 0 5px 5px 10px; background: #eee; border-radius: 2px; }
.pill span { border: 2px solid transparent; border-top: 0; border-bottom: 3px solid #333; }
.tabs > .tri { margin-bottom: 6px; }

/* ribbon */
.ribbon { display: flex; flex: none; height: 88px; padding-left: 2px; border-bottom: 6px solid #686868; background: linear-gradient(#d0d0d0, #8c8c8c); box-shadow: inset 0 1px #fff, inset 0 -1px #eee; }
.panel { display: flex; flex-direction: column; border-right: 1px solid #b4b4b4; background: #fdfdfd; }
.panel .body { flex: 1; display: flex; gap: 4px; padding: 5px 1px 0; }
.panel h2 { display: flex; align-items: center; justify-content: center; gap: 5px; height: 15px; margin: 0 1px 1px; background: #ececec; border-top: 1px solid #ddd; font-size: 10px; font-weight: 400; }
.col { display: flex; flex-direction: column; gap: 1px; }
.big { flex-direction: column; justify-content: flex-start; gap: 2px; padding: 2px 0 0 3px; }
.bigico { width: 26px; height: 26px; }
.grp { display: flex; height: 19px; flex: none; border: 1px solid #d2d2d2; background: linear-gradient(#fafafa, #ececec); }
.grp button { width: 18px; }
.grp button + button { border-left: 1px solid #ddd; width: 20px; }
.grp button.dd { width: 10px; }
.line { display: flex; align-items: center; gap: 3px; height: 19px; }
.combo { display: flex; align-items: center; height: 19px; padding: 0 4px; border: 1px solid #c8c8c8; background: linear-gradient(#fbfbfb, #eee); }
.combo select { flex: 1; height: 16px; opacity: 1; }
.swatch { width: 12px; height: 12px; border: 1px solid #222; background: #fff; }
.links button { height: 19px; gap: 4px; justify-content: flex-start; white-space: nowrap; }
.links .tri { margin-left: 3px; }

.draw { width: 90px; } .draw .big { width: 31px; }
.modify { width: 130px; } .modify .big { width: 30px; }
.layers { width: 177px; }
.layers .fill { flex: 1; }
.layers .combo { width: 167px; gap: 1px; padding: 0 4px 0 1px; }
.layers .line { gap: 3px; }
.layers .swatch { margin: 0 4px 0 2px; }
.annotation { width: 168px; } .annotation .big { width: 78px; }
.letter { height: 26px; font: 31px/26px Roboto, sans-serif; }
.block { width: 135px; } .block .big { width: 33px; }
.properties { width: 343px; } .properties .body { gap: 5px; padding-left: 3px; }
.props .combo { width: 149px; padding: 0 4px; }
.props .swatch { margin: 0 2px 0 -1px; width: 14px; height: 14px; }
.props .links button { gap: 4px; padding-left: 2px; }
.sample { width: 53px; height: 1px; background: #444; margin: 0 2px 0 -2px; }
.sample.short { width: 49px; margin-left: 2px; }
.off { color: #999; }
.off .tri { border-top-color: #777; }
.slider { display: flex; align-items: center; width: 129px; height: 18px; margin-left: 3px; border: 1px solid #c8c8c8; background: #fff; color: #222; }
.slider i { width: 4px; height: 13px; border: 1px solid #777; margin-left: 1px; }
.slider span { flex: 1; }
.slider input { width: 24px; height: 16px; border-left: 1px solid #ccc; text-align: center; }
.properties h2 { position: relative; }
.launch { position: absolute; right: 2px; width: 6px; height: 6px; }
.utilities { width: 82px; } .utilities .big { width: 56px; }
.clipboard { width: 67px; } .clipboard .big { width: 41px; }
.utilities .body, .clipboard .body { gap: 3px; }

/* drawing area */
.canvas { position: relative; flex: 1; min-height: 0; border: solid #8b8b8b; border-width: 0 2px; background: #000; overflow: hidden; }
.drawing { width: 100%; height: 100%; }
.axis { font: 300 15px Lato, sans-serif; fill: #ccc; }
.mdi { position: absolute; top: 6px; right: 6px; display: flex; gap: 5px; }
.mdi button { width: 12px; height: 12px; }
.mdi svg { width: 10px; height: 10px; }
.mdi .dash { align-self: flex-end; margin-bottom: 1px; }
.viewcube { position: absolute; top: 23px; right: 13px; width: 110px; display: flex; flex-direction: column; align-items: center; gap: 7px; }
.viewcube > svg { width: 110px; height: 130px; }
.compass { font: bold 18px "Liberation Sans", sans-serif; fill: #a4a4a4; }
.face { font: bold 10px "Open Sans", sans-serif; fill: #3f4148; }
.wcs { width: 40px; height: 15px; gap: 4px; border: 1px solid #b0b0ba; border-radius: 4px; background: #8a8a92; color: #4c4c54; font: 9px "Liberation Sans", sans-serif; }
.wcs svg { width: 8px; height: 5px; }
.navbar { position: absolute; top: 196px; right: 2px; border-radius: 3px; background: #4b4b4b; }
.navbar svg { width: 27px; height: 176px; }
.twod { font: bold 7px "Liberation Sans", sans-serif; fill: #252525; stroke: none; }

/* layout sheets */
.sheets { display: flex; flex: none; height: 15px; padding-left: 2px; background: #efefef; border-bottom: 1px solid #fff; font: 9px/14px "Liberation Sans", sans-serif; color: #222; }
.steps { display: flex; margin-right: 1px; }
.steps button { width: 12px; border-right: 1px solid #bbb; }
.steps svg { width: 10px; height: 10px; }
.sheet { padding: 0 8px 0 5px; background: linear-gradient(108deg, transparent 0 calc(100% - 4px), #444 calc(100% - 4px) calc(100% - 3px), transparent calc(100% - 3px)); }
.sheet.on { padding: 0 9px 0 10px; background: #000; color: #e8e23c; clip-path: polygon(0 0, 100% 0, calc(100% - 5px) 12px, calc(100% - 6px) 13px, 6px 13px, 5px 12px); }

/* command window */
.command { display: flex; flex: none; height: 59px; border-top: 4px solid #666; background: #a7a7a7; font: 11px/13px "Liberation Mono", monospace; color: #222; }
.grip { width: 12px; height: 6px; border-top: 4px dotted #777; }
.console { flex: 1; display: flex; flex-direction: column; background: #fff; border-left: 1px solid #ddd; }
.history { flex: 1; display: flex; justify-content: space-between; border-bottom: 1px solid #b4b4b4; }
.history pre { margin: 0; padding: 1px 0 0 1px; font: inherit; }
.vscroll { width: 14px; display: flex; flex-direction: column; justify-content: space-between; align-items: center; padding: 5px 0; background: #f0f0f0; }
.prompt { display: flex; height: 15px; padding-left: 1px; line-height: 18px; }
.prompt input { flex: 1; }
.hscroll { display: flex; align-items: center; justify-content: space-between; width: 57px; padding: 0 6px; background: #f0f0f0; }
.hscroll i { width: 12px; height: 12px; margin-right: 10px; border: 1px solid #999; background: #e8e8e8; }
.corner { width: 15px; background: #f0f0f0; }

/* status bar */
.status { display: flex; flex: none; height: 20px; padding-right: 1px; border-bottom: 2px solid #444; border-top: 1px solid #999; background: linear-gradient(#8a8a8a, #777); color: #222; }
.status output { width: 151px; padding-left: 11px; color: #8e8e8e; font: 9px/18px "Liberation Sans", sans-serif; background: linear-gradient(#666, #7a7a7a); }
.toggles { display: flex; gap: 1px; }
.toggles + .toggles { margin-left: 8px; }
.toggles button { width: 17px; height: 17px; background: linear-gradient(#b4b4b4, #999); box-shadow: 1px 0 #ccc; }
.toggles .ico { width: 14px; height: 14px; }
.status output + .toggles { gap: 0; }
.status output + .toggles button { width: 18px; border-left: 1px solid #777; box-shadow: inset 1px 0 #c8c8c8; }
.status output + .toggles .on, .toggles .on { background: linear-gradient(#e8f8fc, #a9d4e0); }
.toggles .text { width: auto; padding: 0 2px; gap: 2px; }
.toggles .pressed { width: 23px; background: #888; border: 1px solid #555; }
.toggles .slim { width: 13px; }
.dimmed { opacity: .45; }
.space { flex: 1; }

/* taskbar */
.taskbar { display: flex; flex: none; height: 32px; background: #141414; color: #eee; }
.start { width: 50px; padding-right: 6px; }
.start svg { width: 32px; height: 32px; }
.task { width: 48px; margin-right: 2px; }
.task svg { width: 26px; height: 26px; }
.task.open { border: 1px solid #999; border-radius: 2px; background: linear-gradient(135deg, #6a6a6a, #222 60%, #3c3c3c); }
.task.wide { width: 51px; }
.task.stack { width: 42px; margin-right: 10px; box-shadow: 2px 0 #222, 3px 0 #888, 5px 0 #222, 6px 0 #777; }
.task.tight { margin: 0 3px; background: linear-gradient(90deg, #333, #8b8580); }
.task.bright { width: 43px; margin-right: 9px; background: linear-gradient(#ddd, #aaa); }
.task.pale { width: 44px; margin-right: 5px; background: linear-gradient(135deg, #b4b0ac, #66625e); box-shadow: 2px 0 #554, 3px 0 #998; }
.wallpaper { flex: 1; display: flex; border-top: 1px solid #666; background: #8f7471; }
.wallpaper .a { flex: 33; background: linear-gradient(90deg, #4d3426, transparent 30px), repeating-linear-gradient(125deg, #8a6264, #957f7c 8px, #8a6264 16px); }
.wallpaper .b { flex: 39; background: repeating-linear-gradient(90deg, #8a5e61, #957f7c 8px, #8a5e61 15px); }
.wallpaper .c { flex: 28; background: repeating-linear-gradient(70deg, #8a5e61, #957f7c 8px, #8a5e61 15px); }
.tray { display: flex; align-items: center; width: 346px; justify-content: flex-end; }
.tray > svg { width: 14px; height: 14px; margin-right: 6px; }
.tray > button { width: 20px; margin-right: 4px; }
.lang { margin: 0 6px 6px 0; }
.tray time { width: 64px; margin-right: 3px; text-align: center; line-height: 14px; }
.tray .peek { width: 11px; height: 30px; margin: 0 1px 0 0; border: 1px solid #777; background: linear-gradient(135deg, #555, #111); }
```
